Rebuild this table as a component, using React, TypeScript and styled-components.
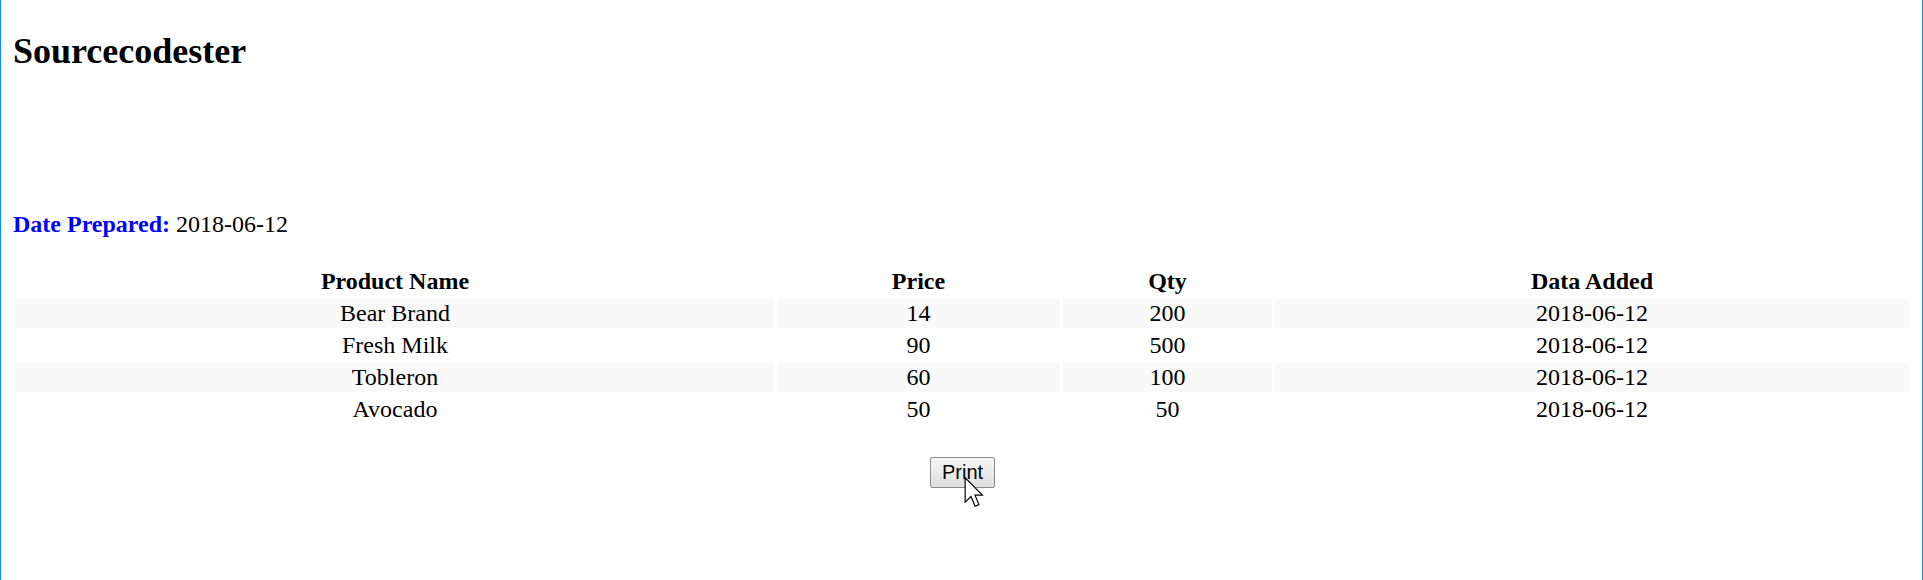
import React from "react";
import styled, { createGlobalStyle } from "styled-components";

const GlobalStyle = createGlobalStyle`
  html, body {
    margin: 0;
    padding: 0;
    background: #ffffff;
  }
  body {
    font-family: "Liberation Serif", "Times New Roman", serif;
    font-size: 24px;
    color: #000;
  }
`;

const Frame = styled.div`
  box-sizing: border-box;
  min-height: 100vh;
  display: flow-root;
  padding: 0 10px 0 12px;
  border-left: 1px solid #1a86dc;
  border-right: 1px solid #1a86dc;
`;

const Title = styled.h2`
  margin: 30px 0 0;
  font-size: 36px;
  font-weight: bold;
  line-height: normal;
`;

const DateLine = styled.p`
  margin: 139px 0 26px;
  line-height: normal;
`;

const DateLabel = styled.b`
  color: #0000ff;
`;

const Table = styled.table`
  width: 100%;
  table-layout: fixed;
  border-collapse: separate;
  border-spacing: 3px;
`;

const HeadCell = styled.th<{ $w: number }>`
  width: ${(p) => p.$w}px;
  height: 29px;
  padding: 0;
  line-height: 29px;
  font-weight: bold;
  text-align: center;
`;

const Row = styled.tr<{ $shaded: boolean }>`
  background: ${(p) => (p.$shaded ? "#f9f9f9" : "transparent")};
`;

const Cell = styled.td`
  height: 29px;
  padding: 0;
  line-height: 29px;
  text-align: center;
`;

const Actions = styled.div`
  margin-top: 30px;
  text-align: center;
`;

const ButtonWrap = styled.span`
  position: relative;
  display: inline-block;
`;

const PrintButton = styled.button`
  box-sizing: border-box;
  width: 65px;
  height: 31px;
  padding: 0;
  font-family: "Liberation Sans", Arial, sans-serif;
  font-size: 20px;
  color: #000;
  border: 1px solid #8c8c8c;
  border-radius: 2px;
  background: linear-gradient(#f5f5f5, #dfdfdf);
  vertical-align: top;
`;

const Cursor = styled.svg`
  position: absolute;
  left: 34px;
  top: 20px;
  pointer-events: none;
`;

const columns = [
  { label: "Product Name", w: 758 },
  { label: "Price", w: 283 },
  { label: "Qty", w: 209 },
  { label: "Data Added", w: 634 },
];

const rows = [
  ["Bear Brand", "14", "200", "2018-06-12"],
  ["Fresh Milk", "90", "500", "2018-06-12"],
  ["Tobleron", "60", "100", "2018-06-12"],
  ["Avocado", "50", "50", "2018-06-12"],
];

export default function App() {
  return (
    <>
      <GlobalStyle />
      <Frame>
        <Title>Sourcecodester</Title>
        <DateLine>
          <DateLabel>Date Prepared:</DateLabel> 2018-06-12
        </DateLine>
        <Table>
          <thead>
            <tr>
              {columns.map((c) => (
                <HeadCell key={c.label} $w={c.w}>
                  {c.label}
                </HeadCell>
              ))}
            </tr>
          </thead>
          <tbody>
            {rows.map((r, i) => (
              <Row key={r[0]} $shaded={i % 2 === 0}>
                {r.map((v, j) => (
                  <Cell key={j}>{v}</Cell>
                ))}
              </Row>
            ))}
          </tbody>
        </Table>
        <Actions>
          <ButtonWrap>
            <PrintButton>Print</PrintButton>
            <Cursor width="20" height="31" viewBox="0 0 13 21">
              <path
                d="M0.5 0.5 L0.5 17 L4.5 13.2 L7.2 19.8 L9.8 18.7 L7.2 12.3 L12.2 12.3 Z"
                fill="#fff"
                stroke="#000"
                strokeWidth="0.8"
                strokeLinejoin="miter"
              />
            </Cursor>
          </ButtonWrap>
        </Actions>
      </Frame>
    </>
  );
}
